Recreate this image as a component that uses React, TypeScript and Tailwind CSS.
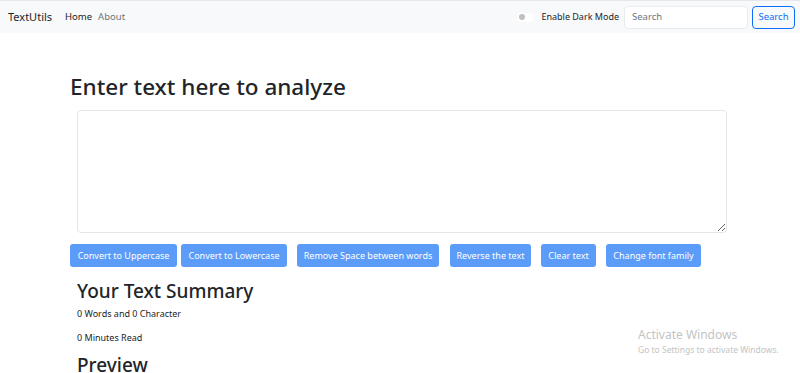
import React from "react";

export default function App() {
  const font = { fontFamily: '"Noto Sans", "Open Sans", sans-serif' };
  const buttons = [
    { t: "Convert to Uppercase", cls: "w-[107px]" },
    { t: "Convert to Lowercase", cls: "w-[106px] ml-[4px]" },
    { t: "Remove Space between words", cls: "w-[142px] ml-[10px]" },
    { t: "Reverse the text", cls: "w-[81px] ml-[11px]" },
    { t: "Clear text", cls: "w-[55px] ml-[10px]" },
    { t: "Change font family", cls: "w-[95px] ml-[10px]" },
  ];
  return (
    <div className="relative w-[800px] h-[373px] overflow-hidden bg-white text-[#212529]" style={font}>
      <nav className="h-[33px] bg-[#f8f9fa] border-t border-[#e5e7ea] flex items-center pl-[8px] pr-[5px]">
        <span className="text-[11px] text-[#212529] mr-[13px]">TextUtils</span>
        <span className="text-[9.5px] text-[#212529] mr-[6px]">Home</span>
        <span className="text-[9.5px] text-[#6c757d]">About</span>
        <div className="ml-auto flex items-center">
          <div className="w-[17px] h-[9px] rounded-full bg-white flex items-center pl-[2px] mr-[7px]">
            <div className="w-[6px] h-[6px] rounded-full bg-[#bfbfbf]" />
          </div>
          <span className="text-[9px] text-[#212529] mr-[5px]">Enable Dark Mode</span>
          <div className="w-[124px] h-[23px] bg-white border border-[#e9ecef] rounded-[4px] flex items-center pl-[7px] text-[9.5px] text-[#6c757d]">
            Search
          </div>
          <div className="ml-[4px] w-[43px] h-[23px] border border-[#0d6efd] rounded-[4px] flex items-center justify-center text-[9.5px] text-[#0d6efd]">
            Search
          </div>
        </div>
      </nav>
      <div className="pl-[70px] pt-[39px]">
        <h1 className="text-[22.5px] font-medium leading-[30px] text-[#212529]">Enter text here to analyze</h1>
        <div className="pl-[7px] mt-[8px]">
          <textarea className="block w-[650px] h-[123px] border border-[#e3e6e9] rounded-[4px] bg-white outline-none" />
        </div>
        <div className="flex mt-[11px]">
          {buttons.map((b) => (
            <div
              key={b.t}
              className={`${b.cls} h-[23px] rounded-[3px] bg-[#5c9cf9] text-white text-[9px] flex items-center justify-center whitespace-nowrap`}
            >
              {b.t}
            </div>
          ))}
        </div>
        <div className="pl-[7px] mt-[12px]">
          <h2 className="text-[19px] font-medium leading-[24px] text-[#212529]">Your Text Summary</h2>
          <p className="text-[9px] mt-[4px] leading-[14px]">0 Words and 0 Character</p>
          <p className="text-[9px] mt-[10px] leading-[14px]">0 Minutes Read</p>
          <h2 className="text-[19px] font-medium leading-[24px] mt-[8px] text-[#212529]">Preview</h2>
        </div>
      </div>
      <div className="absolute left-[638px] top-[327px] text-[#c4c4c4]">
        <div className="text-[12px] leading-[16px]">Activate Windows</div>
        <div className="text-[8.5px] leading-[12px] mt-[1px]">Go to Settings to activate Windows.</div>
      </div>
    </div>
  );
}
